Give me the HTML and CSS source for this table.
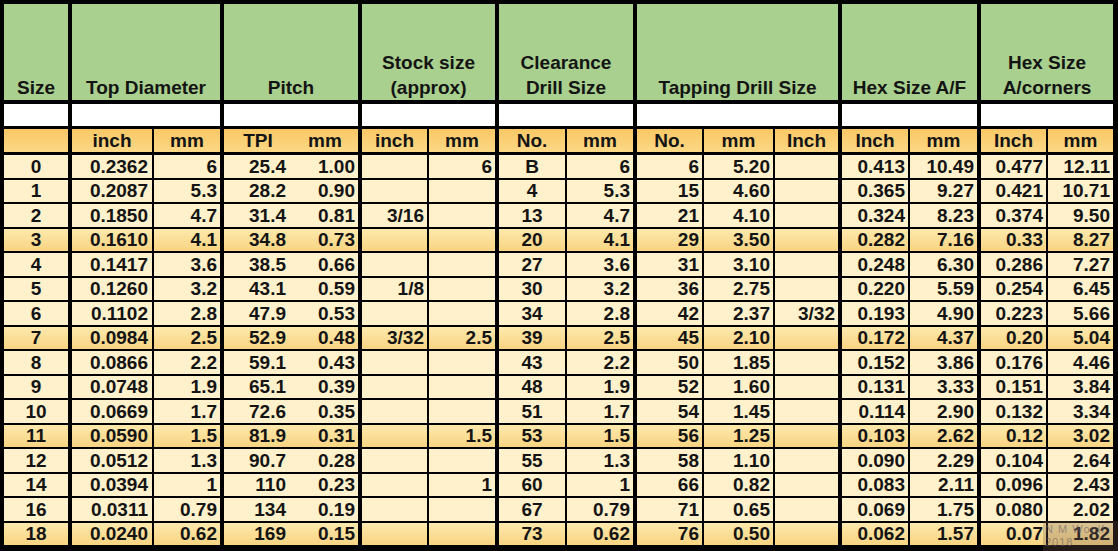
FILE: index.html
```html
<!DOCTYPE html>
<html>
<head>
<meta charset="utf-8">
<link rel="stylesheet" href="styles.css">
</head>
<body>
<div class="sheet">
  <div class="row head">
    <div>Size</div>
    <div class="s2">Top Diameter</div>
    <div class="s2">Pitch</div>
    <div class="s2">Stock size<br>(approx)</div>
    <div class="s2">Clearance<br>Drill Size</div>
    <div class="s3">Tapping Drill Size</div>
    <div class="s2">Hex Size A/F</div>
    <div class="s2">Hex Size<br>A/corners</div>
  </div>
  <div class="row blank">
    <div></div><div class="s2"></div><div class="s2"></div><div class="s2"></div><div class="s2"></div><div class="s3"></div><div class="s2"></div><div class="s2"></div>
  </div>
  <div class="row units">
    <div></div><div>inch</div><div>mm</div><div>TPI</div><div>mm</div><div>inch</div><div>mm</div><div>No.</div><div>mm</div><div>No.</div><div>mm</div><div>Inch</div><div>Inch</div><div>mm</div><div>Inch</div><div>mm</div>
  </div>
  <div class="row data"><div>0</div><div>0.2362</div><div>6</div><div>25.4</div><div>1.00</div><div></div><div>6</div><div>B</div><div>6</div><div>6</div><div>5.20</div><div></div><div>0.413</div><div>10.49</div><div>0.477</div><div>12.11</div></div>
  <div class="row data"><div>1</div><div>0.2087</div><div>5.3</div><div>28.2</div><div>0.90</div><div></div><div></div><div>4</div><div>5.3</div><div>15</div><div>4.60</div><div></div><div>0.365</div><div>9.27</div><div>0.421</div><div>10.71</div></div>
  <div class="row data"><div>2</div><div>0.1850</div><div>4.7</div><div>31.4</div><div>0.81</div><div>3/16</div><div></div><div>13</div><div>4.7</div><div>21</div><div>4.10</div><div></div><div>0.324</div><div>8.23</div><div>0.374</div><div>9.50</div></div>
  <div class="row data hl"><div>3</div><div>0.1610</div><div>4.1</div><div>34.8</div><div>0.73</div><div></div><div></div><div>20</div><div>4.1</div><div>29</div><div>3.50</div><div></div><div>0.282</div><div>7.16</div><div>0.33</div><div>8.27</div></div>
  <div class="row data"><div>4</div><div>0.1417</div><div>3.6</div><div>38.5</div><div>0.66</div><div></div><div></div><div>27</div><div>3.6</div><div>31</div><div>3.10</div><div></div><div>0.248</div><div>6.30</div><div>0.286</div><div>7.27</div></div>
  <div class="row data"><div>5</div><div>0.1260</div><div>3.2</div><div>43.1</div><div>0.59</div><div>1/8</div><div></div><div>30</div><div>3.2</div><div>36</div><div>2.75</div><div></div><div>0.220</div><div>5.59</div><div>0.254</div><div>6.45</div></div>
  <div class="row data"><div>6</div><div>0.1102</div><div>2.8</div><div>47.9</div><div>0.53</div><div></div><div></div><div>34</div><div>2.8</div><div>42</div><div>2.37</div><div>3/32</div><div>0.193</div><div>4.90</div><div>0.223</div><div>5.66</div></div>
  <div class="row data hl"><div>7</div><div>0.0984</div><div>2.5</div><div>52.9</div><div>0.48</div><div>3/32</div><div>2.5</div><div>39</div><div>2.5</div><div>45</div><div>2.10</div><div></div><div>0.172</div><div>4.37</div><div>0.20</div><div>5.04</div></div>
  <div class="row data"><div>8</div><div>0.0866</div><div>2.2</div><div>59.1</div><div>0.43</div><div></div><div></div><div>43</div><div>2.2</div><div>50</div><div>1.85</div><div></div><div>0.152</div><div>3.86</div><div>0.176</div><div>4.46</div></div>
  <div class="row data"><div>9</div><div>0.0748</div><div>1.9</div><div>65.1</div><div>0.39</div><div></div><div></div><div>48</div><div>1.9</div><div>52</div><div>1.60</div><div></div><div>0.131</div><div>3.33</div><div>0.151</div><div>3.84</div></div>
  <div class="row data"><div>10</div><div>0.0669</div><div>1.7</div><div>72.6</div><div>0.35</div><div></div><div></div><div>51</div><div>1.7</div><div>54</div><div>1.45</div><div></div><div>0.114</div><div>2.90</div><div>0.132</div><div>3.34</div></div>
  <div class="row data hl"><div>11</div><div>0.0590</div><div>1.5</div><div>81.9</div><div>0.31</div><div></div><div>1.5</div><div>53</div><div>1.5</div><div>56</div><div>1.25</div><div></div><div>0.103</div><div>2.62</div><div>0.12</div><div>3.02</div></div>
  <div class="row data"><div>12</div><div>0.0512</div><div>1.3</div><div>90.7</div><div>0.28</div><div></div><div></div><div>55</div><div>1.3</div><div>58</div><div>1.10</div><div></div><div>0.090</div><div>2.29</div><div>0.104</div><div>2.64</div></div>
  <div class="row data"><div>14</div><div>0.0394</div><div>1</div><div>110</div><div>0.23</div><div></div><div>1</div><div>60</div><div>1</div><div>66</div><div>0.82</div><div></div><div>0.083</div><div>2.11</div><div>0.096</div><div>2.43</div></div>
  <div class="row data"><div>16</div><div>0.0311</div><div>0.79</div><div>134</div><div>0.19</div><div></div><div></div><div>67</div><div>0.79</div><div>71</div><div>0.65</div><div></div><div>0.069</div><div>1.75</div><div>0.080</div><div>2.02</div></div>
  <div class="row data hl"><div>18</div><div>0.0240</div><div>0.62</div><div>169</div><div>0.15</div><div></div><div></div><div>73</div><div>0.62</div><div>76</div><div>0.50</div><div></div><div>0.062</div><div>1.57</div><div>0.07</div><div>1.82</div></div>
  <div class="watermark"><span>N M Woolf</span><span>2018</span></div>
</div>
</body>
</html>
```
FILE: styles.css
```css
html, body {
  margin: 0;
  padding: 0;
  background: #000;
}
body {
  font-family: "Liberation Sans", Arial, sans-serif;
  font-weight: bold;
  font-size: 19px;
  color: #141414;
}
.sheet {
  position: relative;
  width: 1118px;
  height: 551px;
  box-sizing: border-box;
  background: #000;
  padding: 4px 5px 6px 4px;
  display: flex;
  flex-direction: column;
  overflow: hidden;
}
.row {
  display: grid;
  grid-template-columns: 64px 84px 68px 72px 66px 69px 68px 70px 68px 69px 71px 65px 70px 69px 69px 67px;
}
.s2 { grid-column: span 2; }
.s3 { grid-column: span 3; }

/* green header */
.head { height: 96px; }
.head > div {
  background: #a9d08e;
  display: flex;
  align-items: flex-end;
  justify-content: center;
  text-align: center;
  line-height: 25px;
  padding-bottom: 0;
}
.head > div + div,
.blank > div + div { margin-left: 4px; }

/* white spacer row */
.blank { height: 22px; margin-top: 4px; }
.blank > div { background: #fff; }

/* units row */
.units { height: 23px; margin-top: 3px; }
.units > div {
  background: linear-gradient(to bottom, #f8c866, #fcd885);
  display: flex;
  align-items: center;
  justify-content: center;
}

/* column separators */
.units > :nth-child(2), .units > :nth-child(4), .units > :nth-child(6),
.units > :nth-child(8), .units > :nth-child(10), .units > :nth-child(13),
.units > :nth-child(15),
.data > :nth-child(2), .data > :nth-child(4), .data > :nth-child(6),
.data > :nth-child(8), .data > :nth-child(10), .data > :nth-child(13),
.data > :nth-child(15) { margin-left: 4px; }
.units > :nth-child(3), .units > :nth-child(7), .units > :nth-child(9),
.units > :nth-child(11), .units > :nth-child(12), .units > :nth-child(14),
.units > :nth-child(16),
.data > :nth-child(3), .data > :nth-child(7), .data > :nth-child(9),
.data > :nth-child(11), .data > :nth-child(12), .data > :nth-child(14),
.data > :nth-child(16) { margin-left: 2px; }

/* data rows */
.data { height: 22px; margin-top: 2px; }
.data:nth-child(even) { height: 23px; }
.units + .data { margin-top: 3px; }
.data > div {
  background: #fff1cb;
  display: flex;
  align-items: center;
  justify-content: flex-end;
  padding-right: 3px;
}
.data.hl > div {
  background: linear-gradient(to bottom, #fde9ad, #f8d482);
}
.data > :nth-child(1),
.data > :nth-child(8) {
  justify-content: center;
  padding-right: 0;
}
.data > :nth-child(2) { padding-right: 4px; }
.data > :nth-child(4) { padding-right: 6px; }

/* watermark overlay */
.watermark {
  position: absolute;
  left: 1043px;
  top: 521px;
  width: 75px;
  height: 30px;
  background: rgba(120, 95, 80, 0.28);
  color: rgba(95, 85, 100, 0.55);
  font-family: "Liberation Sans", Arial, sans-serif;
  font-weight: normal;
  font-size: 11px;
  line-height: 13px;
  display: flex;
  flex-direction: column;
  padding: 2px 0 0 2px;
  box-sizing: border-box;
  letter-spacing: 1px;
  white-space: nowrap;
}
```
